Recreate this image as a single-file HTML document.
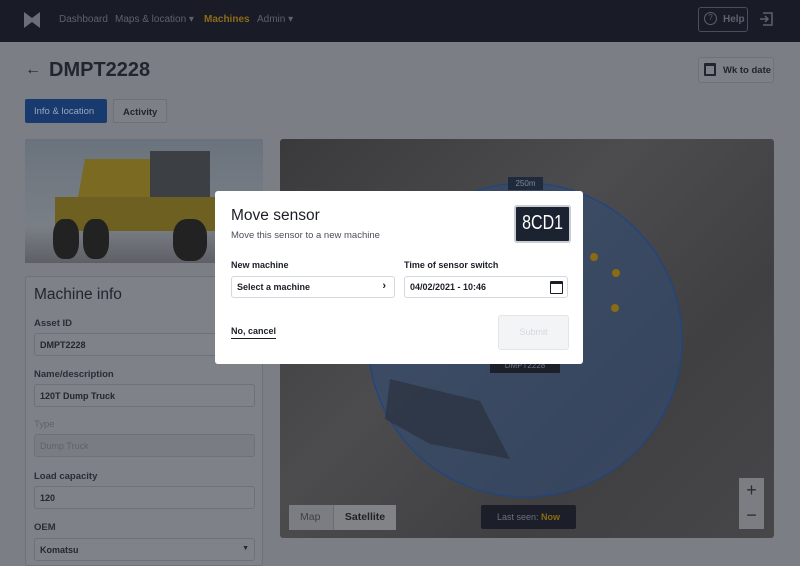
<!DOCTYPE html>
<html><head><style>
*{box-sizing:border-box;margin:0;padding:0}
body{width:800px;height:559px;overflow:hidden;background:#7b7e85;font-family:"Liberation Sans",sans-serif;position:relative}
.nav{position:absolute;left:0;top:0;width:800px;height:42px;background:#191c26}
.nav span{position:absolute;top:14px;font-size:10px;color:#5d6170}
.abs{position:absolute}
.lbl{position:absolute;left:34px;font-size:9.5px;font-weight:bold;color:#2a2d36}
.inp{position:absolute;left:34px;width:221px;height:23px;border:1px solid #6e7178;border-radius:3px;background:#7f8288;font-size:9px;font-weight:bold;color:#24272f;padding:6px 5px}
</style></head><body>
<div class="nav">
<svg class="abs" style="left:24px;top:12px" width="16" height="16" viewBox="0 0 16 16"><path d="M0 0L8 6L16 0V16L8 10L0 16Z" fill="#6b6e78"/></svg>
<span style="left:59px">Dashboard</span>
<span style="left:115px">Maps &amp; location ▾</span>
<span style="left:204px;color:#8c6a1a;font-weight:bold">Machines</span>
<span style="left:257px">Admin ▾</span>
<div class="abs" style="left:698px;top:7px;width:50px;height:25px;border:1px solid #4a4e5a;border-radius:3px;color:#5d6170;font-size:10px;font-weight:bold;padding:6px 0 0 24px">Help</div>
<div class="abs" style="left:704px;top:12px;width:13px;height:13px;border:1.5px solid #5d6170;border-radius:50%;font-size:8px;color:#5d6170;text-align:center;line-height:10px">?</div>
<svg class="abs" style="left:759px;top:12px" width="14" height="14" viewBox="0 0 14 14" fill="none" stroke="#5d6170" stroke-width="1.5"><path d="M4 1H13V13H4M1 7H9M6 4L9 7L6 10"/></svg>
</div>
<div class="abs" style="left:25px;top:61px;font-size:16px;color:#22252d">←</div>
<div class="abs" style="left:49px;top:59px;font-size:20px;font-weight:bold;color:#22252d">DMPT2228</div>
<div class="abs" style="left:698px;top:57px;width:76px;height:26px;border:1px solid #6e7178;border-radius:3px;background:#7d8086;font-size:9.5px;font-weight:bold;color:#22252d;padding:7px 0 0 24px">Wk to date</div>
<div class="abs" style="left:704px;top:63px;width:12px;height:13px;border:2px solid #22252d;border-top-width:3px;border-radius:1px"></div>
<div class="abs" style="left:25px;top:99px;width:82px;height:24px;background:#193a6e;border-radius:2px;color:#9aa6bb;font-size:9.5px;padding:7px 0 0 9px">Info &amp; location</div>
<div class="abs" style="left:113px;top:99px;width:54px;height:24px;border:1px solid #6e7178;background:#7d8086;border-radius:2px;color:#22252d;font-size:9.5px;font-weight:bold;padding:7px 0 0 9px">Activity</div>
<!-- truck image -->
<div class="abs" style="left:25px;top:139px;width:238px;height:124px;background:linear-gradient(#6a737d,#7a7f86 70%,#5e6066);overflow:hidden">
<div class="abs" style="left:55px;top:20px;width:110px;height:55px;background:#7a6a22;transform:skewX(-10deg)"></div>
<div class="abs" style="left:125px;top:12px;width:60px;height:48px;background:#3c3f44"></div>
<div class="abs" style="left:30px;top:58px;width:180px;height:34px;background:#6e6020"></div>
<div class="abs" style="left:28px;top:80px;width:26px;height:40px;border-radius:40%;background:#222"></div>
<div class="abs" style="left:58px;top:80px;width:26px;height:40px;border-radius:40%;background:#222"></div>
<div class="abs" style="left:148px;top:80px;width:34px;height:42px;border-radius:40%;background:#222"></div>
</div>
<!-- card -->
<div class="abs" style="left:25px;top:276px;width:238px;height:290px;border:1px solid #6e7178;border-radius:3px;background:#7e8187"></div>
<div class="abs" style="left:34px;top:286px;font-size:15.5px;color:#22252d">Machine info</div>
<div class="lbl" style="top:318px">Asset ID</div><div class="inp" style="top:333px">DMPT2228</div>
<div class="lbl" style="top:369px">Name/description</div><div class="inp" style="top:384px">120T Dump Truck</div>
<div class="lbl" style="top:419px;color:#60636b;font-weight:normal">Type</div><div class="inp" style="top:434px;background:#797c82;color:#60636b;font-weight:normal">Dump Truck</div>
<div class="lbl" style="top:471px">Load capacity</div><div class="inp" style="top:486px">120</div>
<div class="lbl" style="top:522px">OEM</div><div class="inp" style="top:538px">Komatsu<span style="float:right;font-size:7px">▼</span></div>
<!-- map -->
<div class="abs" style="left:280px;top:139px;width:494px;height:399px;background:linear-gradient(135deg,#3a3a3c,#4c4c4e 40%,#404042 70%,#474749);border-radius:3px;overflow:hidden">
<svg width="494" height="399" class="abs" style="left:0;top:0"><circle cx="245" cy="201" r="157" fill="rgba(50,75,115,0.6)" stroke="#1c4585" stroke-width="1.2"/>
<polygon points="110,240 200,262 230,320 150,305 105,280" fill="rgba(40,45,55,0.6)"/>
<circle cx="314" cy="118" r="4" fill="#8a6a12"/><circle cx="336" cy="134" r="4" fill="#8a6a12"/><circle cx="335" cy="169" r="4" fill="#8a6a12"/></svg>
<div class="abs" style="left:228px;top:38px;width:35px;height:13px;background:#1f2a3c;color:#7e889a;font-size:8px;text-align:center;line-height:13px">250m</div>
<div class="abs" style="left:210px;top:220px;width:70px;height:14px;background:#1c202b;color:#6e7486;font-size:8px;text-align:center;line-height:14px">DMPT2228</div>
<div class="abs" style="left:9px;top:366px;width:107px;height:25px;background:#7b7d82"></div>
<div class="abs" style="left:20px;top:372px;font-size:10.5px;color:#3e4046">Map</div>
<div class="abs" style="left:53px;top:366px;width:63px;height:25px;background:#818387;font-size:10.5px;font-weight:bold;color:#1f2126;text-align:center;line-height:25px;border-left:1px solid #6a6c70">Satellite</div>
<div class="abs" style="left:201px;top:366px;width:95px;height:24px;background:#1c1f29;border-radius:2px;font-size:9px;color:#6b7080;text-align:center;line-height:24px">Last seen: <b style="color:#8a6a12">Now</b></div>
<div class="abs" style="left:459px;top:339px;width:25px;height:51px;background:#7b7d82;color:#2a2c30;font-size:18px;text-align:center;line-height:25px">+<br>−</div>
</div>
<!-- modal -->
<div class="abs" style="left:215px;top:191px;width:368px;height:173px;background:#fff;border-radius:3px">
<div class="abs" style="left:16px;top:16px;font-size:15.5px;color:#1b1e27">Move sensor</div>
<div class="abs" style="left:16px;top:39px;font-size:9.5px;color:#4a4e5a">Move this sensor to a new machine</div>
<div class="abs" style="left:299px;top:14px;width:57px;height:38px;background:#1b2230;border:2px solid #c9ccd2;border-radius:3px;color:#fff;font-size:20px;text-align:center;line-height:33px;overflow:hidden"><span style="display:inline-block;transform:scaleX(0.8)">8CD1</span></div>
<div class="abs" style="left:16px;top:69px;font-size:9px;font-weight:bold;color:#1b1e27">New machine</div>
<div class="abs" style="left:189px;top:69px;font-size:9px;font-weight:bold;color:#1b1e27">Time of sensor switch</div>
<div class="abs" style="left:16px;top:85px;width:164px;height:22px;border:1px solid #d4d7dc;border-radius:3px;font-size:9px;font-weight:bold;color:#1b1e27;padding:5px 0 0 5px">Select a machine<span class="abs" style="right:8px;top:3px;font-size:11px">›</span></div>
<div class="abs" style="left:189px;top:85px;width:164px;height:22px;border:1px solid #d4d7dc;border-radius:3px;font-size:9px;font-weight:bold;color:#1b1e27;padding:5px 0 0 5px">04/02/2021 - 10:46</div>
<div class="abs" style="left:335px;top:90px;width:13px;height:13px;border:1.5px solid #1b1e27;border-top-width:3px;border-radius:1px"></div>
<div class="abs" style="left:16px;top:135px;font-size:9px;font-weight:bold;color:#1b1e27;border-bottom:1.5px solid #1b1e27;padding-bottom:2px">No, cancel</div>
<div class="abs" style="left:283px;top:124px;width:71px;height:35px;background:#f3f4f6;border:1px solid #e3e5e8;border-radius:3px;font-size:9px;color:#d6d8dc;text-align:center;line-height:33px">Submit</div>
</div>
</body></html>
